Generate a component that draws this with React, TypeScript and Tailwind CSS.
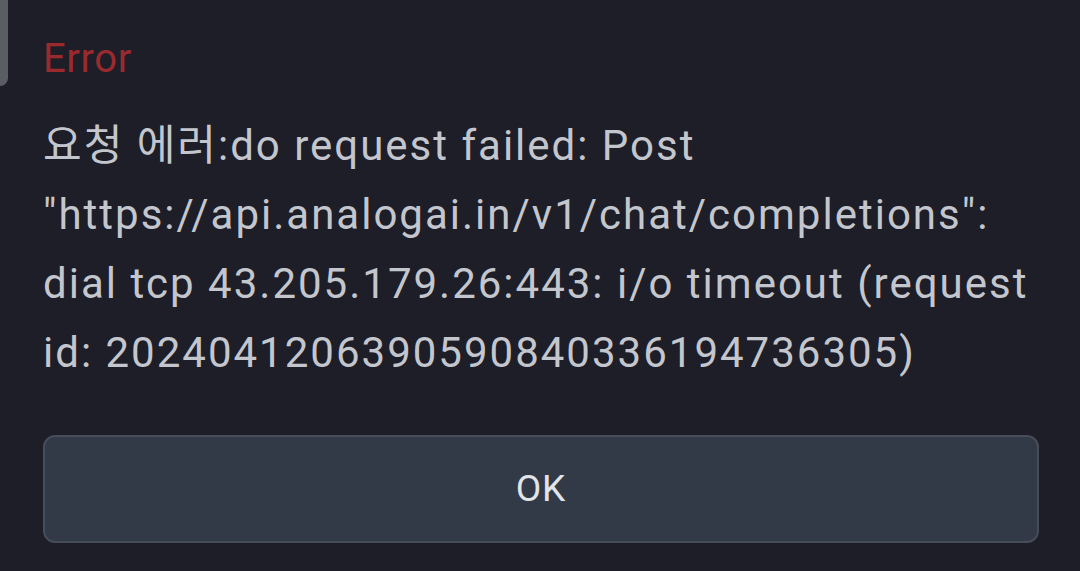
export default function App() {
  return (
    <div
      className="relative h-[571px] w-[1080px] overflow-hidden bg-[#1d1e27]"
      style={{ fontFamily: 'Roboto, "Noto Sans CJK KR", sans-serif' }}
    >
      <div className="absolute left-0 top-0 h-[86px] w-[8px] rounded-br-[8px] bg-[#5b5d65]" />
      <div className="flex flex-col pl-[43px] pr-[41px] pt-[35px]">
        <div className="text-[40px] leading-[48px] tracking-[0.6px] text-[#9b2a2e]">Error</div>
        <div className="mt-[28px] text-[42px] leading-[69px] tracking-[2px] text-[#c4c6ce]">
          요청 에러:do request failed: Post "https://api.analogai.in/v1/chat/completions": dial tcp 43.205.179.26:443: i/o timeout (request id: 2024041206390590840336194736305)
        </div>
        <button className="mt-[48px] flex h-[108px] w-full items-center justify-center rounded-[12px] border-2 border-[#464c58] bg-[#323a48] text-[37px] tracking-[1px] text-[#e2e4e8]">
          OK
        </button>
      </div>
    </div>
  );
}
